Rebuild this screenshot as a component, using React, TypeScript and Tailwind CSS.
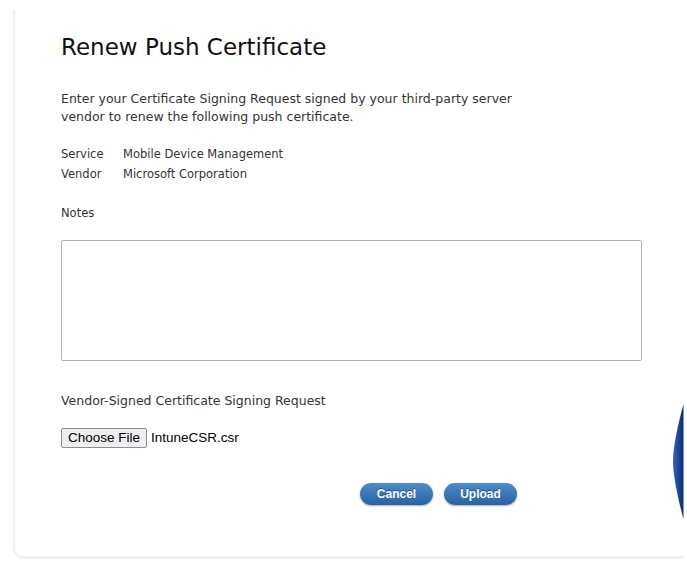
export default function App() {
  return (
    <div className="relative h-[563px] w-[687px] overflow-hidden bg-white">
      <div className="ml-[13px] mt-[10px] h-[549px] w-[671px] rounded-bl-[10px] bg-[#f0f0f0] pb-[3px] pl-[2px]">
        <div
          className="flex h-full flex-col rounded-bl-[8px] bg-white pl-[46px] pr-[44px] text-[#333]"
          style={{ fontFamily: '"DejaVu Sans", sans-serif' }}
        >
          <h1 className="mt-[23px] text-[23px] leading-[28px] text-[#111]">Renew Push Certificate</h1>
          <p className="mt-[29px] w-[470px] text-[12.5px] leading-[18px]">
            Enter your Certificate Signing Request signed by your third-party server vendor to renew the following push certificate.
          </p>
          <div className="mt-[18px] grid grid-cols-[62px_1fr] text-[11.5px] leading-[20px]">
            <span>Service</span>
            <span>Mobile Device Management</span>
            <span>Vendor</span>
            <span>Microsoft Corporation</span>
          </div>
          <div className="mt-[22px] text-[11.5px] leading-[14px]">Notes</div>
          <textarea className="mt-[20px] h-[121px] w-[581px] resize-none rounded-[2px] border border-[#b3b3b3] bg-white" />
          <div className="mt-[32px] text-[12.5px] leading-[16px]">Vendor-Signed Certificate Signing Request</div>
          <div
            className="mt-[19px] flex items-center"
            style={{ fontFamily: '"Liberation Sans", Arial, sans-serif' }}
          >
            <button className="h-[20px] rounded-[2px] border border-[#8f8f8f] bg-[#efefef] px-[6px] text-[13.5px] leading-[18px] text-black">
              Choose File
            </button>
            <span className="ml-[4px] text-[13.5px] text-black">IntuneCSR.csr</span>
          </div>
          <div className="mt-[35px] flex gap-[11px] pl-[299px]" style={{ fontFamily: '"Liberation Sans", Arial, sans-serif' }}>
            <button className="h-[22px] w-[73px] rounded-full bg-gradient-to-b from-[#4f8bc9] to-[#2762a3] text-[12px] font-bold text-white shadow-[0_1px_2px_rgba(0,0,0,0.35)] [text-shadow:0_-1px_0_rgba(0,0,0,0.35)]">
              Cancel
            </button>
            <button className="h-[22px] w-[73px] rounded-full bg-gradient-to-b from-[#4f8bc9] to-[#2762a3] text-[12px] font-bold text-white shadow-[0_1px_2px_rgba(0,0,0,0.35)] [text-shadow:0_-1px_0_rgba(0,0,0,0.35)]">
              Upload
            </button>
          </div>
        </div>
      </div>
      <svg className="absolute left-[670px] top-[403px]" width="15" height="118" viewBox="0 0 15 118">
        <defs>
          <linearGradient id="g" x1="0" x2="1" y1="0" y2="0">
            <stop offset="0" stopColor="#3565b5" />
            <stop offset="1" stopColor="#0a2a78" />
          </linearGradient>
        </defs>
        <path d="M13.5 1 C7 25 3 45 3 58 C3 72 7 92 13.5 116 L13.5 1 Z" fill="url(#g)" />
      </svg>
    </div>
  );
}
